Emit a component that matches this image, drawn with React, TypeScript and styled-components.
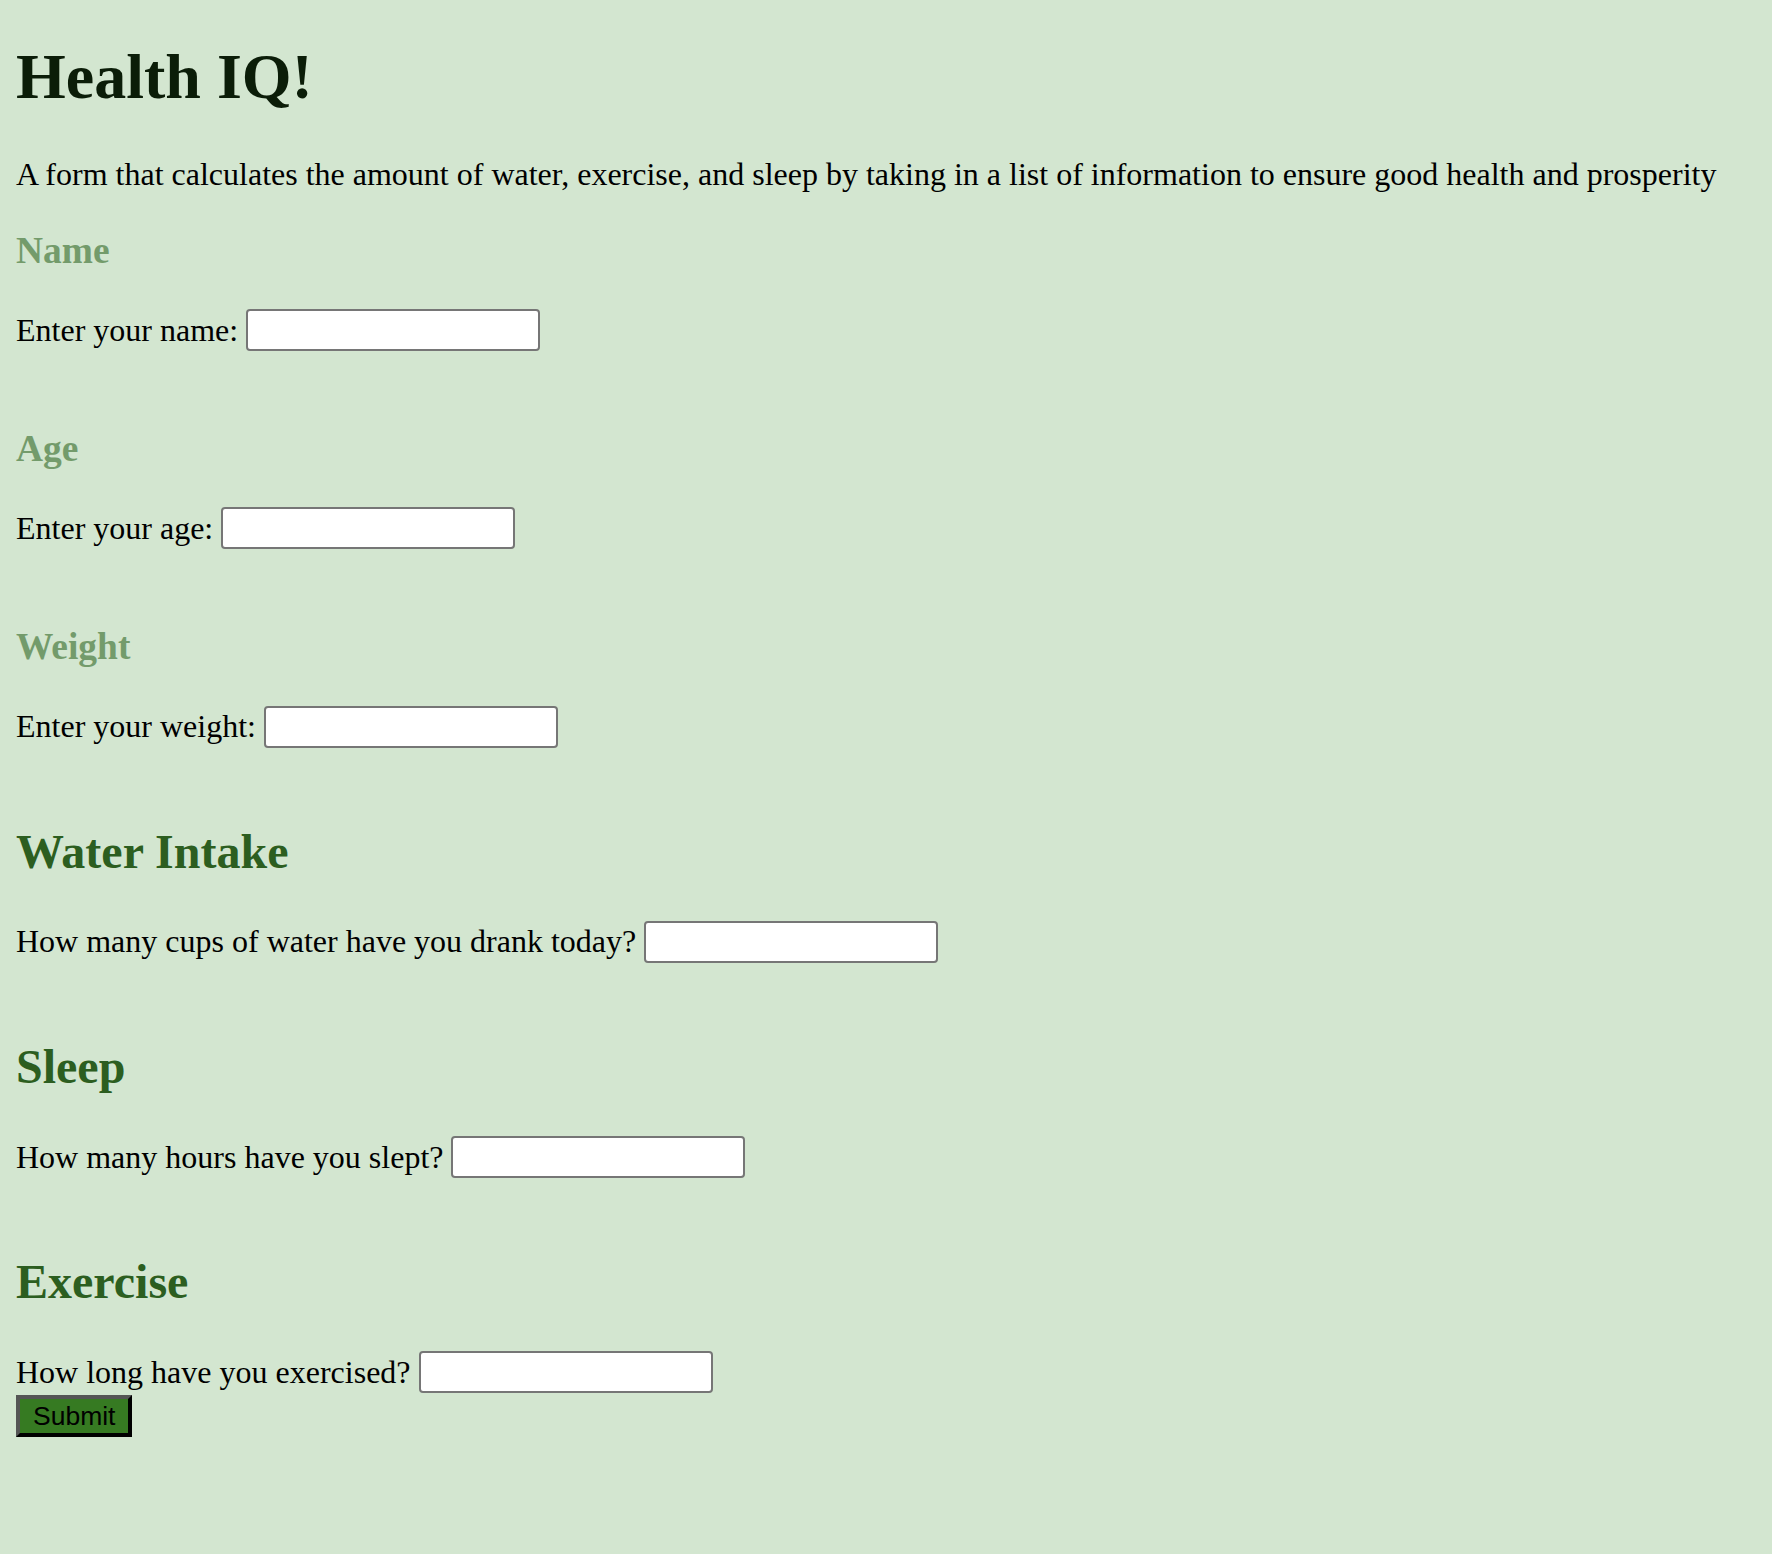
import styled, { createGlobalStyle } from "styled-components";

const GlobalStyle = createGlobalStyle`
  html, body {
    margin: 0;
    background-color: #d3e6d0;
  }
  body {
    padding: 16px;
    font-family: "Liberation Serif", "Times New Roman", serif;
    font-size: 32px;
    color: #000;
  }
`;

const Page = styled.form`
  display: block;
`;

const Title = styled.h1`
  font-size: 64px;
  line-height: 1.15;
  margin: 24px 0 0;
  color: #0b1d08;
  font-weight: bold;
`;

const Intro = styled.p`
  margin: 42px 0 0;
  line-height: 1.15;
`;

const SubHeading = styled.h3`
  font-size: 37.44px;
  line-height: 1.15;
  margin: 37px 0;
  color: #739b6b;
`;

const SectionHeading = styled.h2`
  font-size: 48px;
  line-height: 1.15;
  margin: 40px 0 42px;
  color: #2c5e20;
`;

const Row = styled.div<{ $last?: boolean }>`
  display: flex;
  align-items: center;
  gap: 8px;
  height: 42px;
  margin-bottom: ${(p) => (p.$last ? "2px" : "76px")};
`;

const Label = styled.label`
  line-height: 1.15;
`;

const TextInput = styled.input`
  box-sizing: border-box;
  width: 294px;
  height: 42px;
  border: 2px solid #767676;
  border-radius: 4px;
  background: #fff;
  font-size: 26px;
  padding: 2px 6px;
`;

const SubmitButton = styled.button`
  box-sizing: border-box;
  height: 42px;
  padding: 0 13px;
  font-family: "Liberation Sans", Arial, sans-serif;
  font-size: 26.5px;
  color: #000;
  background-color: #367a22;
  border: 4px outset #4a4a4a;
  border-right-color: #000;
  border-bottom-color: #000;
  border-top-color: #555;
  border-left-color: #555;
  cursor: pointer;
`;

type Field = { heading: string; label: string; big?: boolean };

const fields: Field[] = [
  { heading: "Name", label: "Enter your name:" },
  { heading: "Age", label: "Enter your age:" },
  { heading: "Weight", label: "Enter your weight:" },
  { heading: "Water Intake", label: "How many cups of water have you drank today?", big: true },
  { heading: "Sleep", label: "How many hours have you slept?", big: true },
  { heading: "Exercise", label: "How long have you exercised?", big: true },
];

const App = () => {
  return (
    <>
      <GlobalStyle />
      <Page onSubmit={(e) => e.preventDefault()}>
        <Title>Health IQ!</Title>
        <Intro>
          A form that calculates the amount of water, exercise, and sleep by taking in a list of
          information to ensure good health and prosperity
        </Intro>
        {fields.map((f, i) => (
          <div key={f.heading}>
            {f.big ? (
              <SectionHeading>{f.heading}</SectionHeading>
            ) : (
              <SubHeading>{f.heading}</SubHeading>
            )}
            <Row $last={i === fields.length - 1}>
              <Label>{f.label}</Label>
              <TextInput type="text" />
            </Row>
          </div>
        ))}
        <SubmitButton type="submit">Submit</SubmitButton>
      </Page>
    </>
  );
};

export default App;
